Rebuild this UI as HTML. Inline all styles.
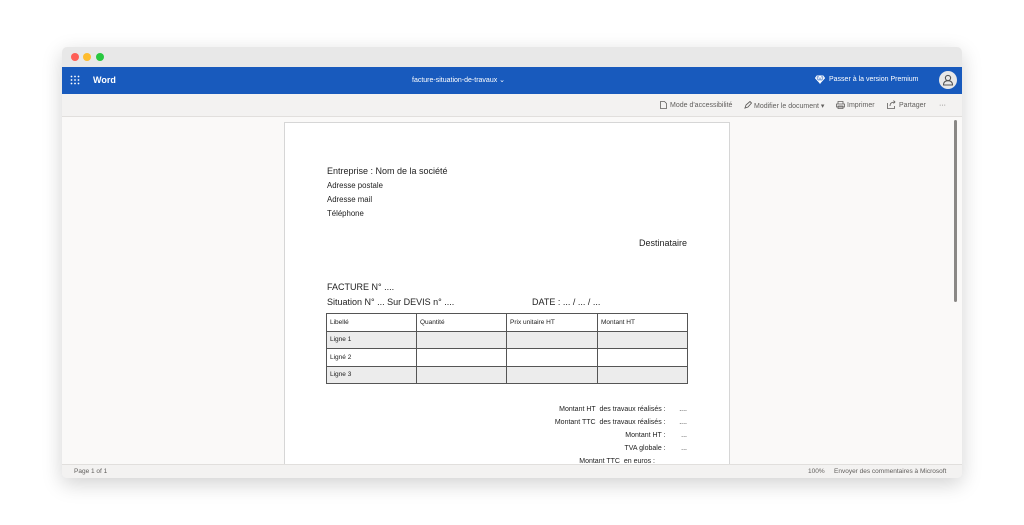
<!DOCTYPE html>
<html><head><meta charset="utf-8"><style>
*{margin:0;padding:0;box-sizing:border-box}
body{width:1024px;height:525px;background:#fff;font-family:"Liberation Sans",sans-serif;position:relative;overflow:hidden}
.win{position:absolute;left:62px;top:47px;width:900px;height:431px;background:#faf9f8;box-shadow:0 6px 20px rgba(0,0,0,.18);border-radius:5px;overflow:hidden}
.title{height:20px;background:#e8e8e8;position:relative}
.dot{position:absolute;top:6px;width:8px;height:8px;border-radius:50%}
.blue{position:absolute;top:20px;left:0;right:0;height:27px;background:#185abd;color:#fff}
.tool{position:absolute;top:47px;left:0;right:0;height:23px;background:#f3f2f1;border-bottom:1px solid #e1dfdd;font-size:7px;color:#605e5c}
.tool span{position:absolute;top:8px}
.page{position:absolute;left:222px;top:75px;width:446px;height:343px;background:#fff;border:1px solid #d6d6d6;border-bottom:none;font-size:9px;color:#222}
.page p{position:absolute;white-space:nowrap}
table{position:absolute;left:41px;top:190px;width:362px;border-collapse:collapse;font-size:6.5px}
td{border:1px solid #555;height:17.5px;padding:0 3px;vertical-align:middle}
tr.g td{background:#ececec}
.status{position:absolute;left:0;right:0;top:417px;height:14px;background:#f3f2f1;border-top:1px solid #e1dfdd;font-size:6.5px;color:#605e5c}
.sum{right:42px;text-align:right;font-size:7px}
</style></head><body>
<div class="win">
 <div class="title">
  <div class="dot" style="left:9px;background:#fe5f57"></div>
  <div class="dot" style="left:21px;background:#febc2e"></div>
  <div class="dot" style="left:34px;background:#28c840"></div>
 </div>
 <div class="blue">
  <svg style="position:absolute;left:8px;top:8px" width="10" height="10" viewBox="0 0 10 10" fill="#fff">
   <circle cx="1.5" cy="1.5" r=".9"/><circle cx="5" cy="1.5" r=".9"/><circle cx="8.5" cy="1.5" r=".9"/>
   <circle cx="1.5" cy="5" r=".9"/><circle cx="5" cy="5" r=".9"/><circle cx="8.5" cy="5" r=".9"/>
   <circle cx="1.5" cy="8.5" r=".9"/><circle cx="5" cy="8.5" r=".9"/><circle cx="8.5" cy="8.5" r=".9"/></svg>
  <span style="position:absolute;left:31px;top:8px;font-size:9px;font-weight:bold">Word</span>
  <span style="position:absolute;left:350px;top:9px;font-size:7px">facture-situation-de-travaux ⌄</span>
  <svg style="position:absolute;left:753px;top:8px" width="10" height="9" viewBox="0 0 10 9" fill="none" stroke="#fff" stroke-width="1"><path d="M2 1h6l1.5 2L5 8 .5 3z M.5 3h9 M5 8 3.5 3 5 1 6.5 3z"/></svg>
  <span style="position:absolute;left:767px;top:9px;font-size:7px">Passer à la version Premium</span>
  <div style="position:absolute;left:877px;top:4px;width:18px;height:18px;border-radius:50%;background:#e8e8e8"><svg width="18" height="18" viewBox="0 0 18 18" fill="none" stroke="#555" stroke-width="1.1"><circle cx="9" cy="7" r="2.6"/><path d="M4.5 14c0-3 2-4.3 4.5-4.3s4.5 1.3 4.5 4.3z"/></svg></div>
 </div>
 <div class="tool">
  <svg style="position:absolute;left:598px;top:7px" width="7" height="8" viewBox="0 0 7 8" fill="none" stroke="#605e5c" stroke-width=".8"><path d="M.5.5h4l2 2v5h-6z"/></svg>
  <span style="left:608px">Mode d'accessibilité</span>
  <svg style="position:absolute;left:682px;top:7px" width="8" height="8" viewBox="0 0 8 8" fill="none" stroke="#605e5c" stroke-width=".9"><path d="M1 7l1-3 4-3.5 1.5 1.5L4 6z"/></svg>
  <span style="left:692px">Modifier le document ▾</span>
  <svg style="position:absolute;left:774px;top:7px" width="9" height="8" viewBox="0 0 9 8" fill="none" stroke="#605e5c" stroke-width=".8"><path d="M2 3V.5h5V3 M.5 3h8v3h-8z M2 5h5v2.5H2z"/></svg>
  <span style="left:785px">Imprimer</span>
  <svg style="position:absolute;left:825px;top:6px" width="9" height="9" viewBox="0 0 9 9" fill="none" stroke="#605e5c" stroke-width=".8"><path d="M.5 3v5.5h7V6 M3 6c0-3 2-4 5-4 M6.5.5 8 2 6.5 3.5"/></svg>
  <span style="left:837px">Partager</span>
  <span style="left:877px">···</span>
 </div>
 <div style="position:absolute;left:892px;top:73px;width:3px;height:182px;background:#8a8886;border-radius:2px"></div>
 <div class="page">
  <p style="left:42px;top:43px">Entreprise : Nom de la société</p>
  <p style="left:42px;top:58px;font-size:7.8px">Adresse postale</p>
  <p style="left:42px;top:72px;font-size:7.8px">Adresse mail</p>
  <p style="left:42px;top:86px;font-size:7.8px">Téléphone</p>
  <p style="right:42px;top:115px">Destinataire</p>
  <p style="left:42px;top:159px">FACTURE N° ....</p>
  <p style="left:42px;top:174px">Situation N° ... Sur DEVIS n° ....</p>
  <p style="left:247px;top:174px">DATE : ... / ... / ...</p>
  <table>
   <tr><td style="width:90px">Libellé</td><td style="width:90px">Quantité</td><td style="width:91px">Prix unitaire HT</td><td>Montant HT</td></tr>
   <tr class="g"><td>Ligne 1</td><td></td><td></td><td></td></tr>
   <tr><td>Ligné 2</td><td></td><td></td><td></td></tr>
   <tr class="g"><td>Ligne 3</td><td></td><td></td><td></td></tr>
  </table>
  <p class="sum" style="top:283px">Montant HT &nbsp;des travaux réalisés : &nbsp;&nbsp;&nbsp;&nbsp;&nbsp;&nbsp;....</p>
  <p class="sum" style="top:296px">Montant TTC &nbsp;des travaux réalisés : &nbsp;&nbsp;&nbsp;&nbsp;&nbsp;&nbsp;....</p>
  <p class="sum" style="top:309px">Montant HT : &nbsp;&nbsp;&nbsp;&nbsp;&nbsp;&nbsp;&nbsp;...</p>
  <p class="sum" style="top:322px">TVA globale : &nbsp;&nbsp;&nbsp;&nbsp;&nbsp;&nbsp;&nbsp;...</p>
  <p class="sum" style="top:335px;right:74px">Montant TTC &nbsp;en euros :</p>
 </div>
 <div class="status">
  <span style="position:absolute;left:12px;top:3px">Page 1 of 1</span>
  <span style="position:absolute;left:746px;top:3px">100%</span>
  <span style="position:absolute;left:772px;top:3px">Envoyer des commentaires à Microsoft</span>
 </div>
</div>
</body></html>
